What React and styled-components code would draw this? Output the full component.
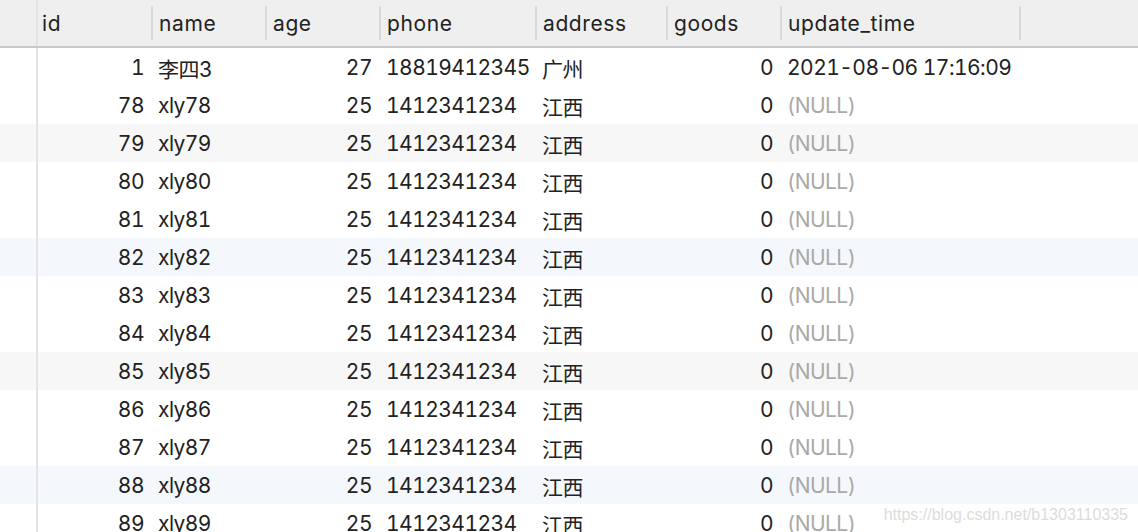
import React from 'react'
import styled, { createGlobalStyle } from 'styled-components'

const GlobalStyle = createGlobalStyle`
  html, body {
    margin: 0;
    padding: 0;
    background: #ffffff;
  }
  body {
    font-family: Inter, "Noto Sans", "Noto Sans CJK SC", sans-serif;
    color: #222222;
    overflow: hidden;
  }
`

const COLS = '38px 113px 114px 114px 156px 131px 114px 239px 1fr'

const Root = styled.div`
  position: relative;
  width: 1138px;
  height: 532px;
  overflow: hidden;
  background: #ffffff;
`

const HeaderRow = styled.div`
  display: grid;
  grid-template-columns: ${COLS};
  height: 46px;
  background: #efefef;
  border-bottom: 2px solid #c9c9c9;
`

const HeaderCell = styled.div`
  display: flex;
  align-items: center;
  padding-left: ${(p) => (p.$first ? '4px' : '6px')};
  font-size: 21px;
  letter-spacing: 0.6px;
  color: #222222;
  border-left: ${(p) => (p.$noSep ? 'none' : '2px solid transparent')};
  position: relative;

  &::before {
    content: '';
    display: ${(p) => (p.$noSep ? 'none' : 'block')};
    position: absolute;
    left: -2px;
    top: 6px;
    bottom: 6px;
    width: 2px;
    background: #d9d9d9;
  }
`

const Gutter = styled.div`
  border-right: 2px solid #e4e4e4;
`

const Row = styled.div`
  display: grid;
  grid-template-columns: ${COLS};
  height: 38px;
  background: ${(p) => p.$bg || '#ffffff'};
`

const Cell = styled.div`
  display: flex;
  align-items: center;
  justify-content: ${(p) => (p.$num ? 'flex-end' : 'flex-start')};
  padding: ${(p) => (p.$num ? '1px 7px 0 0' : '1px 0 0 7px')};
  font-size: 21px;
  font-variant-numeric: tabular-nums;
  letter-spacing: -0.55px;
  color: ${(p) => (p.$null ? '#a9a9a9' : '#222222')};
  white-space: nowrap;
  overflow: hidden;
`

const Watermark = styled.div`
  position: absolute;
  right: 10px;
  bottom: 8px;
  font-family: "Liberation Sans", Arial, sans-serif;
  font-size: 16px;
  color: #dcdcdc;
  white-space: nowrap;
`

const headers = ['id', 'name', 'age', 'phone', 'address', 'goods', 'update_time', '']

const rows = [
  { id: 1, name: '李四3', age: 27, phone: '18819412345', address: '广州', goods: 0, time: '2021-08-06 17:16:09' },
  ...Array.from({ length: 12 }, (_, i) => ({
    id: 78 + i,
    name: `xly${78 + i}`,
    age: 25,
    phone: '1412341234',
    address: '江西',
    goods: 0,
    time: null,
  })),
]

// every third row gets a tint, gray and blue in turn
function stripe(i) {
  if (i % 3 !== 2) return null
  return Math.floor(i / 3) % 2 === 0 ? '#f7f7f7' : '#f4f8fc'
}

export default function App() {
  return (
    <Root>
      <GlobalStyle />
      <HeaderRow>
        <Gutter />
        {headers.map((h, i) => (
          <HeaderCell key={i} $first={i === 0} $noSep={i === 0}>
            {h}
          </HeaderCell>
        ))}
      </HeaderRow>
      {rows.map((r, i) => (
        <Row key={r.id} $bg={stripe(i)}>
          <Gutter />
          <Cell $num>{r.id}</Cell>
          <Cell>{r.name}</Cell>
          <Cell $num>{r.age}</Cell>
          <Cell>{r.phone}</Cell>
          <Cell>{r.address}</Cell>
          <Cell $num>{r.goods}</Cell>
          <Cell $null={!r.time}>{r.time || '(NULL)'}</Cell>
          <Cell />
        </Row>
      ))}
      <Watermark>https://blog.csdn.net/b1303110335</Watermark>
    </Root>
  )
}
